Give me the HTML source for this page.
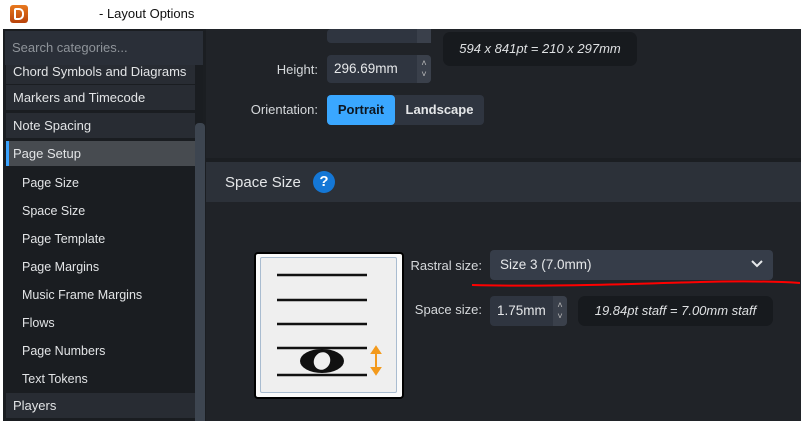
<!DOCTYPE html>
<html><head><meta charset="utf-8"><style>
*{margin:0;padding:0;box-sizing:border-box}
body{width:801px;height:421px;overflow:hidden;background:#1b1e22;font-family:"Liberation Sans",sans-serif;position:relative;color:#e6e8ea}
.a{position:absolute}
.title{left:0;top:0;width:801px;height:29px;background:#fff;color:#111;font-size:13px}
.side{left:3px;top:29px;width:200px;height:392px;background:#1a1d21}
.it{position:absolute;left:3px;width:189px;height:25px;background:#282c33;font-size:13px;line-height:25px;padding-left:7px;color:#e2e4e6}
.sub{position:absolute;left:19px;font-size:12.5px;color:#e2e4e6}
.lbl{font-size:13px;color:#d5d8db;text-align:right}
.fld{background:#2f3540;border-radius:4px;font-size:13.5px;line-height:28px;padding-left:7px}
.info{background:#171a1e;border-radius:7px;font-style:italic;font-size:13px;color:#dfe1e3;text-align:center}
</style></head><body>
<div class="a title">
 <div class="a" style="left:10px;top:5px;width:18px;height:18px;border-radius:3px;background:linear-gradient(#e8781e,#b8420a)"></div>
 <div class="a" style="left:14px;top:8px;width:10px;height:12px;border:2px solid #fff;border-radius:2px 5px 5px 2px"></div>
 <div class="a" style="left:99px;top:6px;font-size:13px">- Layout Options</div>
</div>
<div class="a" style="left:0;top:29px;width:3px;height:392px;background:#fff"></div>
<div class="a side">
 <div class="it" style="top:30px;">Chord Symbols and Diagrams</div>
 <div class="a" style="left:2px;top:2px;width:198px;height:34px;background:#2a2f38;color:#8f949a;font-size:13px;line-height:34px;padding-left:7px">Search categories...</div>
 <div class="it" style="top:56px">Markers and Timecode</div>
 <div class="it" style="top:84px">Note Spacing</div>
 <div class="it" style="top:112px;background:#474b50;border-left:3px solid #3aa3ff;padding-left:4px">Page Setup</div>
 <div class="sub" style="top:147px">Page Size</div>
 <div class="sub" style="top:175px">Space Size</div>
 <div class="sub" style="top:203px">Page Template</div>
 <div class="sub" style="top:231px">Page Margins</div>
 <div class="sub" style="top:259px">Music Frame Margins</div>
 <div class="sub" style="top:287px">Flows</div>
 <div class="sub" style="top:315px">Page Numbers</div>
 <div class="sub" style="top:343px">Text Tokens</div>
 <div class="it" style="top:364px">Players</div>
 <div class="a" style="left:192px;top:94px;width:10px;height:298px;background:#3d4550;border-radius:4px 4px 0 0"></div>
</div>
<div class="a" style="left:206px;top:29px;width:595px;height:129px;background:#202328"></div>
<div class="a" style="left:206px;top:162px;width:595px;height:40px;background:#2c3139"></div>
<div class="a" style="left:206px;top:202px;width:595px;height:219px;background:#202328"></div>
<div class="a fld" style="left:327px;top:29px;width:104px;height:14px;overflow:hidden;background:#2f3540"></div>
<div class="a" style="left:417px;top:29px;width:14px;height:14px;background:#3a404b"></div>
<div class="a lbl" style="left:240px;top:62px;width:78px">Height:</div>
<div class="a fld" style="left:327px;top:55px;width:104px;height:28px">296.69mm</div>
<div class="a" style="left:417px;top:55px;width:14px;height:28px;background:#3a404b;border-radius:0 4px 4px 0;font-size:9px;color:#bbb;text-align:center;line-height:11px;padding-top:3px">˄<br>˅</div>
<div class="a info" style="left:443px;top:32px;width:194px;height:34px;line-height:34px">594 x 841pt = 210 x 297mm</div>
<div class="a lbl" style="left:230px;top:102px;width:88px">Orientation:</div>
<div class="a" style="left:327px;top:95px;width:157px;height:30px;background:#2f3540;border-radius:4px"></div>
<div class="a" style="left:327px;top:95px;width:68px;height:30px;background:#3aa7ff;border-radius:4px;color:#0d1620;font-weight:bold;font-size:13px;line-height:30px;text-align:center">Portrait</div>
<div class="a" style="left:395px;top:95px;width:89px;height:30px;color:#e4e6e8;font-weight:bold;font-size:13px;line-height:30px;text-align:center">Landscape</div>
<div class="a" style="left:225px;top:174px;font-size:15px;color:#e4e6e8">Space Size</div>
<div class="a" style="left:313px;top:171px;width:22px;height:22px;border-radius:50%;background:#1477d6;color:#fff;font-weight:bold;font-size:15px;text-align:center;line-height:22px">?</div>
<div class="a" style="left:254px;top:252px;width:150px;height:147px;background:#fafafa;border:2px solid #000;border-radius:4px"></div>
<div class="a" style="left:260px;top:257px;width:137px;height:136px;background:#efefef;border:1px solid #a9bcd0;border-radius:2px"></div>
<svg class="a" style="left:253px;top:251px" width="151" height="148">
<g stroke="#111" stroke-width="2.5"><line x1="24" y1="24" x2="114" y2="24"/><line x1="24" y1="49" x2="114" y2="49"/><line x1="24" y1="73" x2="114" y2="73"/><line x1="24" y1="97" x2="114" y2="97"/><line x1="24" y1="124" x2="114" y2="124"/></g>
<ellipse cx="69" cy="110" rx="22" ry="12" fill="#111"/>
<ellipse cx="69" cy="110" rx="8" ry="9" fill="#efefef" transform="rotate(30 69 110)"/>
<g stroke="#f39a1c" stroke-width="2" fill="#f39a1c"><line x1="123" y1="99" x2="123" y2="120"/><path d="M119 102 L123 96 L127 102Z M119 117 L123 123 L127 117Z"/></g>
</svg>
<div class="a lbl" style="left:400px;top:258px;width:82px">Rastral size:</div>
<div class="a fld" style="left:490px;top:250px;width:283px;height:30px;line-height:30px;padding-left:10px;background:#363d49">Size 3 (7.0mm)</div>
<svg class="a" style="left:750px;top:259px" width="14" height="10"><path d="M2 2 L7 7 L12 2" stroke="#e6e8ea" stroke-width="2" fill="none"/></svg>
<svg class="a" style="left:470px;top:280px" width="330" height="10"><path d="M2 5 C80 7 160 4 230 2 C270 1 300 1 330 3" stroke="#f00" stroke-width="2" fill="none"/></svg>
<div class="a lbl" style="left:400px;top:302px;width:82px">Space size:</div>
<div class="a fld" style="left:490px;top:296px;width:77px;height:30px;line-height:30px">1.75mm</div>
<div class="a" style="left:553px;top:296px;width:14px;height:30px;background:#3a404b;border-radius:0 4px 4px 0;font-size:9px;color:#bbb;text-align:center;line-height:11px;padding-top:4px">˄<br>˅</div>
<div class="a info" style="left:578px;top:296px;width:195px;height:30px;line-height:30px">19.84pt staff = 7.00mm staff</div>
</body></html>
